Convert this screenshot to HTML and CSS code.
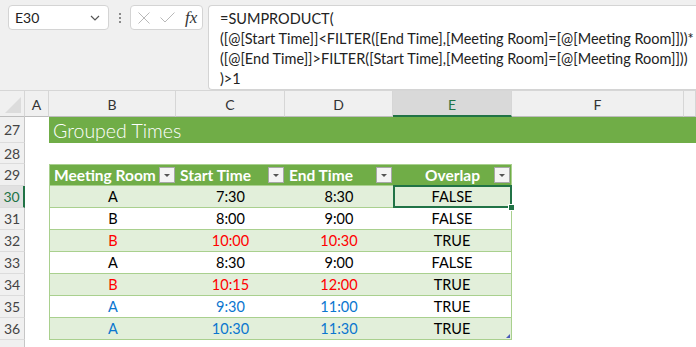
FILE: index.html
```html
<!DOCTYPE html>
<html lang="en">
<head>
  <meta charset="UTF-8">
  <title>Grouped Times</title>
  <link rel="stylesheet" href="styles.css">
</head>
<body>
  <div class="formula-bar">
    <div class="name-box">
      <span>E30</span>
      <svg class="chevron" width="10" height="6" viewBox="0 0 10 6"><path d="M1 1 L5 5 L9 1" fill="none" stroke="#555" stroke-width="1.2"/></svg>
    </div>
    <div class="dots"><i></i><i></i><i></i></div>
    <div class="fx-box">
      <svg width="12" height="12" viewBox="0 0 12 12"><path d="M0.5 0.5 L11.5 11.5 M11.5 0.5 L0.5 11.5" stroke="#b9b9b9" stroke-width="1"/></svg>
      <svg width="15" height="11" viewBox="0 0 15 11"><path d="M0.5 5.5 L5 10 L14.5 0.5" fill="none" stroke="#b9b9b9" stroke-width="1"/></svg>
      <span class="fx">fx</span>
    </div>
    <div class="formula-box">
      <div>=SUMPRODUCT(</div>
      <div>([@[Start Time]]&lt;FILTER([End Time],[Meeting Room]=[@[Meeting Room]]))*</div>
      <div>([@[End Time]]&gt;FILTER([Start Time],[Meeting Room]=[@[Meeting Room]]))</div>
      <div>)&gt;1</div>
    </div>
  </div>

  <div class="sheet">
    <!-- column headers -->
    <div class="corner"></div>
    <div class="col-head">A</div>
    <div class="col-head">B</div>
    <div class="col-head">C</div>
    <div class="col-head">D</div>
    <div class="col-head active">E</div>
    <div class="col-head">F</div>
    <div class="col-head"></div>

    <!-- 27 -->
    <div class="row-head tall">27</div>
    <div class="cell tall"></div>
    <div class="title">Grouped Times</div>

    <!-- 28 -->
    <div class="row-head short">28</div>
    <div class="cell short blank-row"></div>

    <!-- 29 header -->
    <div class="row-head">29</div>
    <div class="cell"></div>
    <div class="th first"><span>Meeting Room</span><b class="dd"></b></div>
    <div class="th"><span>Start Time</span><b class="dd"></b></div>
    <div class="th"><span>End Time</span><b class="dd"></b></div>
    <div class="th last right"><span>Overlap</span><b class="dd"></b></div>
    <div class="cell span2"></div>

    <!-- 30 -->
    <div class="row-head active">30</div>
    <div class="cell"></div>
    <div class="td first band">A</div>
    <div class="td band">7:30</div>
    <div class="td band">8:30</div>
    <div class="td last band selected">FALSE</div>
    <div class="cell span2"></div>

    <!-- 31 -->
    <div class="row-head">31</div>
    <div class="cell"></div>
    <div class="td first">B</div>
    <div class="td">8:00</div>
    <div class="td">9:00</div>
    <div class="td last">FALSE</div>
    <div class="cell span2"></div>

    <!-- 32 -->
    <div class="row-head">32</div>
    <div class="cell"></div>
    <div class="td first band red">B</div>
    <div class="td band red">10:00</div>
    <div class="td band red">10:30</div>
    <div class="td last band">TRUE</div>
    <div class="cell span2"></div>

    <!-- 33 -->
    <div class="row-head">33</div>
    <div class="cell"></div>
    <div class="td first">A</div>
    <div class="td">8:30</div>
    <div class="td">9:00</div>
    <div class="td last">FALSE</div>
    <div class="cell span2"></div>

    <!-- 34 -->
    <div class="row-head">34</div>
    <div class="cell"></div>
    <div class="td first band red">B</div>
    <div class="td band red">10:15</div>
    <div class="td band red">12:00</div>
    <div class="td last band">TRUE</div>
    <div class="cell span2"></div>

    <!-- 35 -->
    <div class="row-head">35</div>
    <div class="cell"></div>
    <div class="td first blue">A</div>
    <div class="td blue">9:30</div>
    <div class="td blue">11:00</div>
    <div class="td last">TRUE</div>
    <div class="cell span2"></div>

    <!-- 36 -->
    <div class="row-head">36</div>
    <div class="cell"></div>
    <div class="td first band blue">A</div>
    <div class="td band blue">10:30</div>
    <div class="td band blue">11:30</div>
    <div class="td last band resize">TRUE</div>
    <div class="cell span2"></div>

    <!-- 37 -->
    <div class="row-head"></div>
    <div class="cell blank-row"></div>
  </div>
</body>
</html>
```

FILE: styles.css
```css
body {
  margin: 0;
  width: 696px;
  height: 347px;
  overflow: hidden;
  background: #ffffff;
  font-family: Lato, "Liberation Sans", sans-serif;
  color: #000;
}

/* formula bar */
.formula-bar {
  height: 91px;
  box-sizing: border-box;
  background: #f0f0f0;
  display: flex;
  align-items: flex-start;
  padding: 5px 0 0 8px;
  border-bottom: 1px solid #d6d6d6;
}

.name-box {
  width: 101px;
  height: 25px;
  box-sizing: border-box;
  background: #fff;
  border: 1px solid #d4d4d4;
  border-radius: 4px;
  display: flex;
  align-items: center;
  justify-content: space-between;
  padding: 0 8px 0 6px;
  font-size: 14px;
  color: #222;
}

.dots {
  width: 21px;
  height: 25px;
  display: flex;
  flex-direction: column;
  align-items: center;
  justify-content: center;
  gap: 2px;
}

.dots i {
  width: 2px;
  height: 2px;
  background: #8a8a8a;
}

.fx-box {
  width: 73px;
  height: 25px;
  box-sizing: border-box;
  background: #fff;
  border: 1px solid #d4d4d4;
  border-radius: 4px;
  display: flex;
  align-items: center;
  gap: 10px;
  padding-left: 7px;
}

.fx {
  font-family: "Liberation Serif", serif;
  font-style: italic;
  font-size: 17px;
  color: #333;
}

.formula-box {
  flex: 1;
  margin-left: 5px;
  height: 85px;
  box-sizing: border-box;
  background: #fff;
  border: 1px solid #d4d4d4;
  border-right: none;
  border-radius: 4px 0 0 4px;
  padding: 3px 0 0 11px;
  font-size: 14.5px;
  line-height: 20px;
  color: #222;
  white-space: nowrap;
}

/* sheet grid */
.sheet {
  display: grid;
  grid-template-columns: 25px 24px 127px 109px 108px 119px 172px 1fr;
  grid-template-rows: 26px 26px 21px repeat(9, 22px);
  font-size: 14.5px;
}

.corner,
.col-head {
  background: #f0f0f0;
  border-bottom: 1px solid #bdbdbd;
  box-sizing: border-box;
}

.corner {
  position: relative;
  border-right: 1px solid #d6d6d6;
}

.corner::after {
  content: "";
  position: absolute;
  right: 3px;
  bottom: 3px;
  border-left: 16px solid transparent;
  border-bottom: 16px solid #dcdcdc;
}

.col-head {
  border-right: 1px solid #d6d6d6;
  display: flex;
  align-items: center;
  justify-content: center;
  color: #333;
  font-size: 14px;
  padding-top: 2px;
}

.col-head.active {
  background: #d9d9d9;
  border-bottom: 2px solid #217346;
  color: #217346;
}

.row-head {
  background: #f0f0f0;
  border-right: 1px solid #c6c6c6;
  border-bottom: 1px solid #dcdcdc;
  box-sizing: border-box;
  display: flex;
  align-items: center;
  justify-content: center;
  color: #444;
  font-size: 14px;
}

.row-head.active {
  background: #e1e1e1;
  border-right: 2px solid #217346;
  color: #217346;
}

.blank-row {
  grid-column: 2 / -1;
}

.span2 {
  grid-column: 7 / -1;
}

.title {
  grid-column: 3 / -1;
  background: #70ad47;
  color: #fff;
  font-size: 19.5px;
  font-weight: 300;
  display: flex;
  align-items: center;
  padding-left: 4px;
}

/* table */
.th,
.td {
  box-sizing: border-box;
  border-bottom: 1px solid #a9d08e;
  display: flex;
  align-items: center;
}

.th {
  background: #70ad47;
  color: #fff;
  font-weight: 700;
  font-size: 15.5px;
  justify-content: space-between;
  padding: 0 1px 0 4px;
  border-top: 1px solid #a9d08e;
}

.th.right {
  justify-content: flex-end;
  gap: 14px;
}

.dd {
  width: 16px;
  height: 16px;
  box-sizing: border-box;
  background: #f4f4f4;
  border: 1px solid #a8a8a8;
  position: relative;
}

.dd::after {
  content: "";
  position: absolute;
  left: 4px;
  top: 6px;
  border-left: 3px solid transparent;
  border-right: 3px solid transparent;
  border-top: 3px solid #555;
}

.td {
  justify-content: center;
  background: #fff;
}

.td.band {
  background: #e2efda;
}

.first {
  border-left: 1px solid #a9d08e;
}

.last {
  border-right: 1px solid #a9d08e;
}

.red {
  color: #ff0000;
}

.blue {
  color: #0b76cf;
}

.selected {
  position: relative;
}

.selected::before {
  content: "";
  position: absolute;
  left: 0;
  top: -1px;
  right: -1px;
  bottom: -1px;
  border: 2px solid #217346;
}

.selected::after {
  content: "";
  position: absolute;
  right: -4px;
  bottom: -4px;
  width: 5px;
  height: 5px;
  background: #217346;
  border: 1px solid #fff;
}

.resize {
  position: relative;
}

.resize::after {
  content: "";
  position: absolute;
  right: 1px;
  bottom: 1px;
  border-left: 4px solid transparent;
  border-bottom: 4px solid #4a5cb8;
}
```
